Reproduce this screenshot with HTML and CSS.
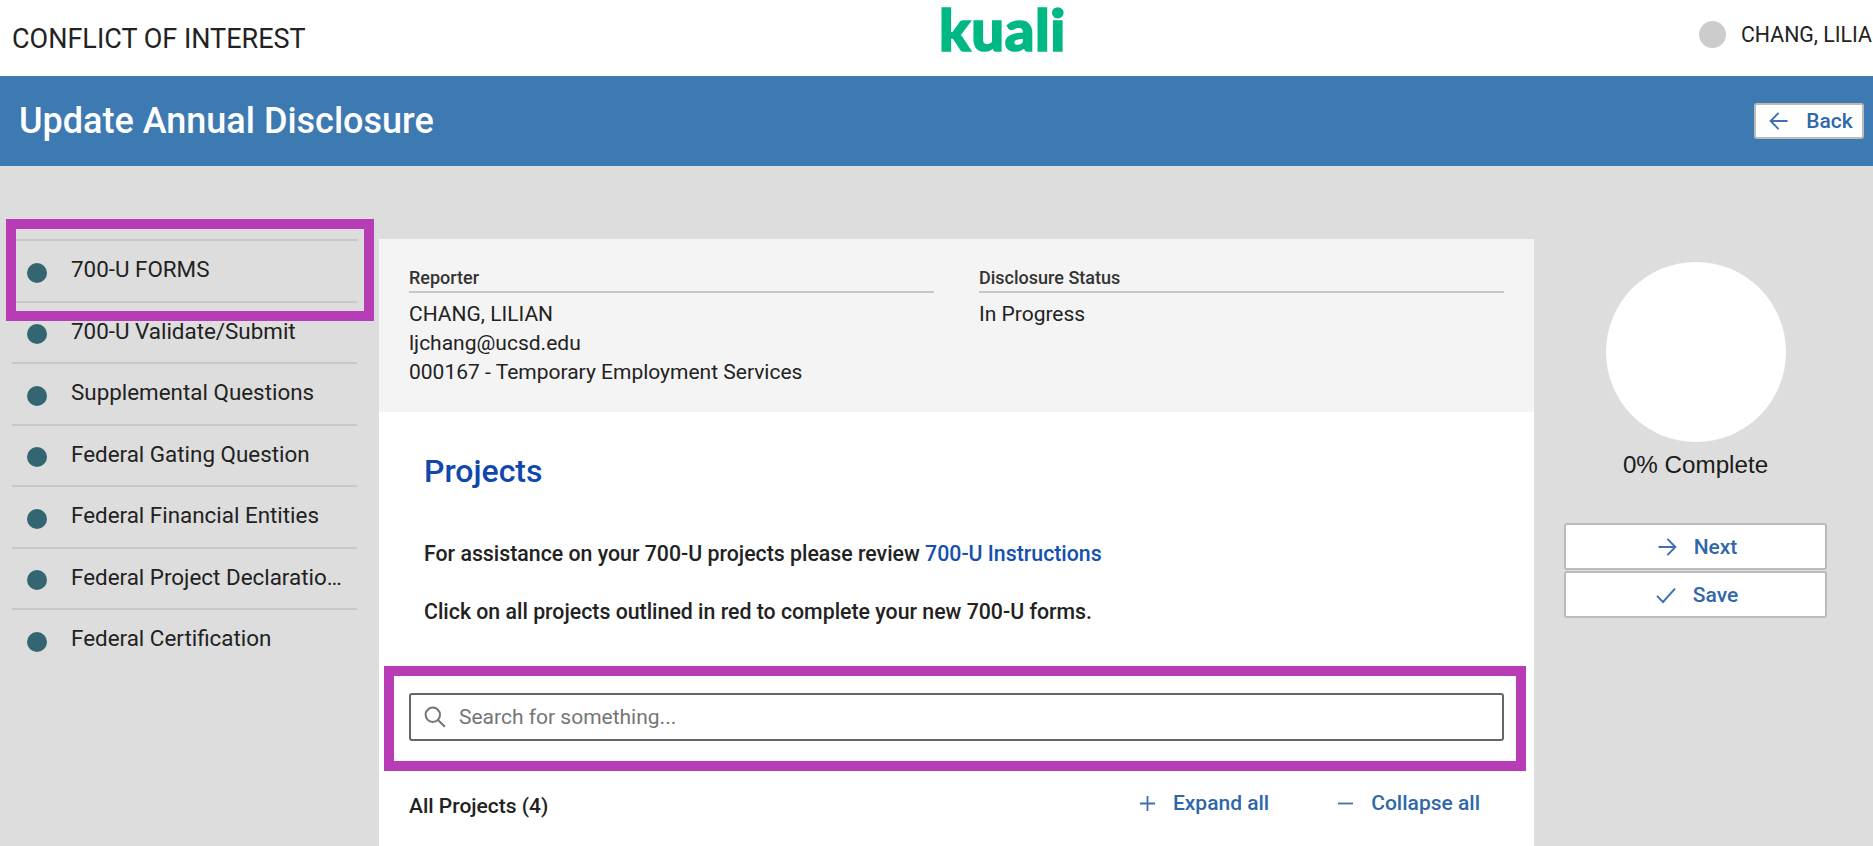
FILE: index.html
```html
<!DOCTYPE html>
<html lang="en">
<head>
<meta charset="utf-8">
<title>Update Annual Disclosure</title>
<link rel="stylesheet" href="styles.css">
</head>
<body>
<header class="topbar">
  <div class="app-name">CONFLICT OF INTEREST</div>
  <div class="logo">kuali</div>
  <div class="user"><span class="avatar"></span><span class="user-name">CHANG, LILIAN</span></div>
</header>
<section class="banner">
  <h1 class="banner-title">Update Annual Disclosure</h1>
  <button class="btn btn-back" type="button">
    <svg class="icon" viewBox="0 0 20 20"><path d="M18.5 10H1.8M9.6 1.8 1.6 10l8 8.2"/></svg>
    <span>Back</span>
  </button>
</section>
<div class="layout">
  <nav class="sidebar">
    <ul class="steps">
      <li class="step"><span class="dot"></span><span class="step-label">700-U FORMS</span></li>
      <li class="step"><span class="dot"></span><span class="step-label">700-U Validate/Submit</span></li>
      <li class="step"><span class="dot"></span><span class="step-label">Supplemental Questions</span></li>
      <li class="step"><span class="dot"></span><span class="step-label">Federal Gating Question</span></li>
      <li class="step"><span class="dot"></span><span class="step-label">Federal Financial Entities</span></li>
      <li class="step"><span class="dot"></span><span class="step-label">Federal Project Declaration Details</span></li>
      <li class="step"><span class="dot"></span><span class="step-label">Federal Certification</span></li>
    </ul>
    <div class="highlight highlight-nav"></div>
  </nav>
  <main class="card">
    <div class="meta">
      <div class="meta-col">
        <div class="meta-label">Reporter</div>
        <div class="meta-value">CHANG, LILIAN<br>ljchang@ucsd.edu<br>000167 - Temporary Employment Services</div>
      </div>
      <div class="meta-col">
        <div class="meta-label">Disclosure Status</div>
        <div class="meta-value">In Progress</div>
      </div>
    </div>
    <div class="content">
      <div class="intro">
        <h2 class="section-title">Projects</h2>
        <p class="note">For assistance on your 700-U projects please review <a class="link" href="#">700-U Instructions</a></p>
        <p class="note note-second">Click on all projects outlined in red to complete your new 700-U forms.</p>
      </div>
      <div class="search-area">
        <label class="search">
          <svg class="search-icon" viewBox="0 0 22 22"><circle cx="8.8" cy="8.8" r="7.2"/><path d="m14 14 6.8 6.8"/></svg>
          <input class="search-input" type="text" placeholder="Search for something...">
        </label>
        <div class="highlight highlight-search"></div>
      </div>
      <div class="list-head">
        <div class="list-title">All Projects (4)</div>
        <div class="list-actions">
          <a class="action" href="#"><svg class="icon" viewBox="0 0 18 18"><path d="M9 1v16M1 9h16"/></svg><span>Expand all</span></a>
          <a class="action" href="#"><svg class="icon" viewBox="0 0 18 18"><path d="M1 9h16"/></svg><span>Collapse all</span></a>
        </div>
      </div>
    </div>
  </main>
  <aside class="rail">
    <div class="progress"></div>
    <div class="progress-label">0% Complete</div>
    <div class="rail-actions">
      <button class="btn btn-wide" type="button">
        <svg class="icon" viewBox="0 0 20 20"><path d="M1.5 10h16.7M10.4 1.8l8 8.2-8 8.2"/></svg>
        <span>Next</span>
      </button>
      <button class="btn btn-wide" type="button">
        <svg class="icon" viewBox="0 0 20 20"><path d="M1 10.8 7 17 19 3.6"/></svg>
        <span>Save</span>
      </button>
    </div>
  </aside>
</div>
</body>
</html>
```
FILE: styles.css
```css
* { box-sizing: border-box; }
html, body { margin: 0; height: 846px; overflow: hidden; }
body { font-family: Roboto, "Liberation Sans", sans-serif; color: #222; background: #ddd; }

.topbar { height: 76px; background: #fff; display: flex; align-items: center; position: relative; overflow: hidden; }
.app-name { margin: 2px 0 0 12px; font-size: 27px; color: #222; }
.logo { font-family: Lato, sans-serif; font-weight: 900; font-size: 58px; line-height: 1; color: #00b884; letter-spacing: 0.6px; -webkit-text-stroke: 1.6px #00b884; position: absolute; left: 939px; top: 0; }
.user { position: absolute; left: 1699px; top: 21px; display: flex; align-items: center; white-space: nowrap; gap: 15px; }
.avatar { width: 27px; height: 27px; border-radius: 50%; background: #ccc; }
.user-name { font-size: 21.3px; color: #222; }

.banner { height: 90px; background: #3e7ab2; display: flex; align-items: center; justify-content: space-between; padding: 0 9px 0 19px; }
.banner-title { margin: 0; font-size: 36px; font-weight: 500; color: #fff; }

.btn { display: flex; align-items: center; justify-content: center; background: #fff; border: 2px solid #bbb; border-radius: 3px; color: #2f68a8; font-family: Roboto, sans-serif; font-size: 21px; font-weight: 500; padding: 1px 0 0 3px; }
.btn-back { width: 110px; height: 36px; gap: 17px; font-weight: 500; padding: 0 0 0 4px; }
.btn-wide { width: 263px; height: 47px; gap: 17px; }
.icon { width: 20px; height: 20px; fill: none; stroke: #3f6fb0; stroke-width: 1.9; flex: none; }

.layout { display: flex; align-items: flex-start; padding: 73px 0 0 12px; }

.sidebar { width: 345px; flex: none; position: relative; }
.steps { list-style: none; margin: 0; padding: 0; }
.step { height: 61.5px; border-top: 2px solid #c8c8c8; display: flex; align-items: center; gap: 24px; padding-left: 15px; }
.dot { width: 20px; height: 20px; border-radius: 50%; background: #336670; flex: none; position: relative; top: 2px; }
.step-label { font-size: 22.4px; color: #222; white-space: nowrap; overflow: hidden; text-overflow: ellipsis; width: 272px; padding-bottom: 3px; }

.highlight { position: absolute; border: 10px solid #b83cb5; pointer-events: none; }
.highlight-nav { left: -6px; top: -20px; width: 368px; height: 102px; }
.highlight-search { left: -25px; top: -27px; width: 1142px; height: 105px; }

.card { width: 1155px; flex: none; margin-left: 22px; background: #fff; }
.meta { background: #f4f4f4; padding: 27px 30px 25px; display: grid; grid-template-columns: 525px 525px; column-gap: 45px; }
.meta-label { font-size: 18px; font-weight: 500; line-height: 24px; color: #333; padding-bottom: 1px; border-bottom: 2px solid #c8c8c8; }
.meta-value { margin-top: 7px; font-size: 21px; line-height: 29px; color: #222; }

.content { padding-bottom: 40px; }
.intro { padding: 39px 45px 0; }
.section-title { margin: 0; font-size: 32px; line-height: 40px; font-weight: 500; color: #0f47af; }
.note { margin: 49px 0 0; font-size: 21.3px; line-height: 28px; font-weight: 500; color: #222; }
.note-second { margin-top: 30px; }
.link { color: #1550b0; text-decoration: none; }

.search-area { position: relative; margin: 67px 30px 0; }
.search { display: flex; align-items: center; height: 48px; border: 2px solid #666; border-radius: 3px; background: #fff; padding-left: 13px; gap: 13px; }
.search-icon { width: 22px; height: 22px; fill: none; stroke: #757575; stroke-width: 2; flex: none; }
.search-input { flex: 1; border: 0; outline: 0; background: transparent; font-family: Roboto, sans-serif; font-size: 21px; padding: 0; }
.search-input::placeholder { color: #757575; opacity: 1; }

.list-head { display: flex; align-items: center; justify-content: space-between; margin: 48px 54px 0 30px; height: 28px; }
.list-title { font-size: 21px; font-weight: 500; color: #222; position: relative; top: 3px; }
.list-actions { display: flex; gap: 68px; }
.action { display: flex; align-items: center; gap: 17px; font-size: 21px; font-weight: 500; color: #2f68a8; text-decoration: none; }
.action .icon { width: 17px; height: 17px; }

.rail { width: 263px; flex: none; margin: 23px 0 0 30px; display: flex; flex-direction: column; align-items: center; }
.progress { width: 180px; height: 180px; border-radius: 50%; background: #fff; }
.progress-label { font-family: "Liberation Sans", Arial, sans-serif; font-size: 24.2px; line-height: 28px; margin-top: 9px; color: #1a1a1a; }
.rail-actions { display: flex; flex-direction: column; gap: 1px; margin-top: 44px; }
```
